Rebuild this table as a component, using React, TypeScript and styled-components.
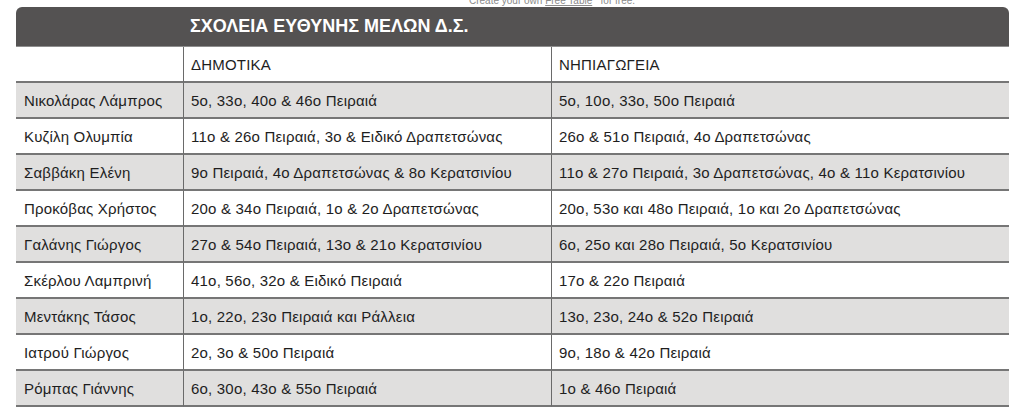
import React from 'react';
import styled, { createGlobalStyle } from 'styled-components';

const GlobalStyle = createGlobalStyle`
  html, body {
    margin: 0;
    padding: 0;
    background: #ffffff;
    font-family: 'Liberation Sans', Arial, sans-serif;
    overflow: hidden;
  }
`;

type Row = { name: string; primary: string; nursery: string };

const rows: Row[] = [
  { name: 'Νικολάρας Λάμπρος', primary: '5ο, 33ο, 40ο & 46ο Πειραιά', nursery: '5ο, 10ο, 33ο, 50ο Πειραιά' },
  { name: 'Κυζίλη Ολυμπία', primary: '11ο & 26ο Πειραιά, 3ο & Ειδικό Δραπετσώνας', nursery: '26ο & 51ο Πειραιά, 4ο Δραπετσώνας' },
  { name: 'Σαββάκη Ελένη', primary: '9ο Πειραιά, 4ο Δραπετσώνας & 8ο Κερατσινίου', nursery: '11ο & 27ο Πειραιά, 3ο Δραπετσώνας, 4ο & 11ο Κερατσινίου' },
  { name: 'Προκόβας Χρήστος', primary: '20ο & 34ο Πειραιά, 1ο & 2ο Δραπετσώνας', nursery: '20ο, 53ο και 48ο Πειραιά, 1ο και 2ο Δραπετσώνας' },
  { name: 'Γαλάνης Γιώργος', primary: '27ο & 54ο Πειραιά, 13ο & 21ο Κερατσινίου', nursery: '6ο, 25ο και 28ο Πειραιά, 5ο Κερατσινίου' },
  { name: 'Σκέρλου Λαμπρινή', primary: '41ο, 56ο, 32ο & Ειδικό Πειραιά', nursery: '17ο & 22ο Πειραιά' },
  { name: 'Μεντάκης Τάσος', primary: '1ο, 22ο, 23ο Πειραιά και Ράλλεια', nursery: '13ο, 23ο, 24ο & 52ο Πειραιά' },
  { name: 'Ιατρού Γιώργος', primary: '2ο, 3ο & 50ο Πειραιά', nursery: '9ο, 18ο & 42ο Πειραιά' },
  { name: 'Ρόμπας Γιάννης', primary: '6ο, 30ο, 43ο & 55ο Πειραιά', nursery: '1ο & 46ο Πειραιά' },
];

const Page = styled.div`
  width: 1024px;
  height: 407px;
  display: flex;
  flex-direction: column;
`;

const Note = styled.div`
  height: 7px;
  overflow: hidden;
  padding-left: 469px;
  font-size: 10px;
  line-height: 10px;
  color: #8a8a8a;
`;

const NoteText = styled.div`
  margin-top: -4px;
  white-space: pre;
  a {
    color: #8a8a8a;
  }
`;

const Wrap = styled.div`
  padding: 0 15px 0 16px;
`;

const Table = styled.table`
  width: 993px;
  border-collapse: separate;
  border-spacing: 0;
  table-layout: fixed;
  font-size: 15px;
  letter-spacing: 0.2px;
  color: #1e1e1e;
`;

const TitleCell = styled.th<{ $first?: boolean; $last?: boolean }>`
  height: 39px;
  padding: 0 7px;
  background: #545252;
  color: #ffffff;
  text-align: left;
  font-size: 18px;
  font-weight: bold;
  letter-spacing: 0;
  border-bottom: 1px solid #8e8e8e;
  border-top-left-radius: ${({ $first }) => ($first ? '6px' : '0')};
  border-top-right-radius: ${({ $last }) => ($last ? '6px' : '0')};
`;

const Tr = styled.tr<{ $shaded?: boolean }>`
  background: ${({ $shaded }) => ($shaded ? '#e0dfde' : '#ffffff')};
`;

const Td = styled.td<{ $first?: boolean }>`
  height: 34px;
  padding: 0 ${({ $first }) => ($first ? '8px' : '7px')};
  border-bottom: 2px solid #767676;
  border-left: ${({ $first }) => ($first ? 'none' : '1px solid #6a6a6a')};
  white-space: nowrap;
  overflow: hidden;
  vertical-align: middle;
`;

const BottomShade = styled.div`
  flex: 1;
  background: linear-gradient(#d4d4d4, #ececec);
`;

export default function App() {
  return (
    <Page>
      <GlobalStyle />
      <Note>
        <NoteText>
          Create your own <a href="#">Free Table</a>   for free.
        </NoteText>
      </Note>
      <Wrap>
        <Table>
          <colgroup>
            <col style={{ width: 167 }} />
            <col style={{ width: 368 }} />
            <col style={{ width: 458 }} />
          </colgroup>
          <thead>
            <tr>
              <TitleCell $first />
              <TitleCell colSpan={2} $last>
                ΣΧΟΛΕΙΑ ΕΥΘΥΝΗΣ ΜΕΛΩΝ Δ.Σ.
              </TitleCell>
            </tr>
          </thead>
          <tbody>
            <Tr>
              <Td $first />
              <Td>ΔΗΜΟΤΙΚΑ</Td>
              <Td>ΝΗΠΙΑΓΩΓΕΙΑ</Td>
            </Tr>
            {rows.map((r, i) => (
              <Tr key={r.name} $shaded={i % 2 === 0}>
                <Td $first>{r.name}</Td>
                <Td>{r.primary}</Td>
                <Td>{r.nursery}</Td>
              </Tr>
            ))}
          </tbody>
        </Table>
      </Wrap>
      <BottomShade />
    </Page>
  );
}
